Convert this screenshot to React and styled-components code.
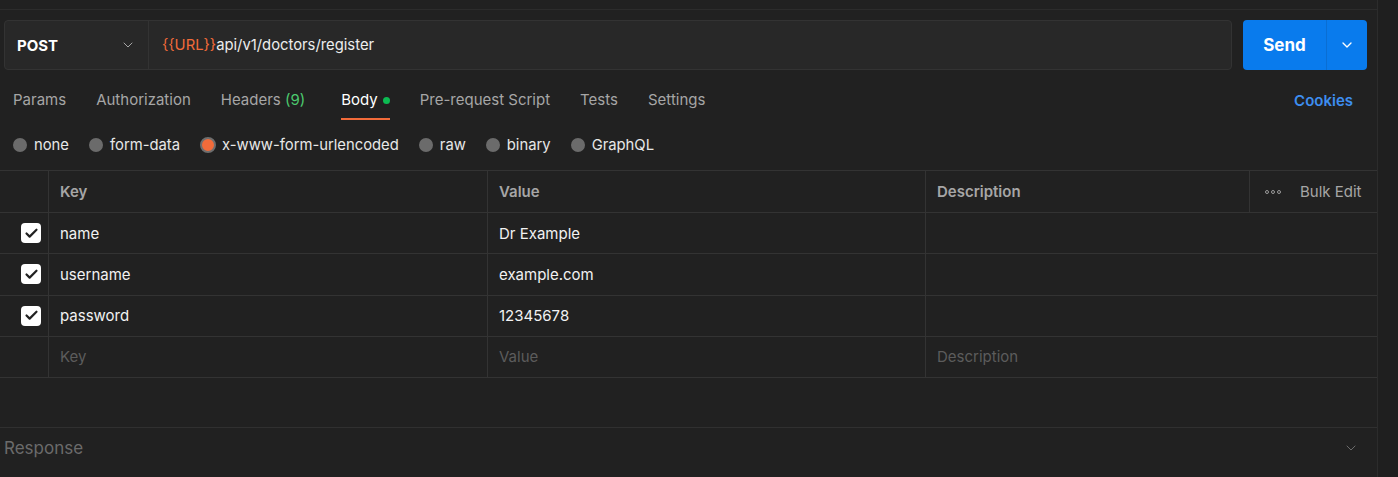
import React from "react";
import styled, { createGlobalStyle } from "styled-components";
import { ChevronDown, Check } from "lucide-react";

const Global = createGlobalStyle`
  html, body { margin: 0; padding: 0; background: #212121; }
  body { font-family: Inter, "Noto Sans", sans-serif; font-size: 15px; color: #e8e8e8; -webkit-font-smoothing: antialiased; }
  * { box-sizing: border-box; }
`;

const Shell = styled.div`
  display: flex;
  width: 1398px;
  height: 477px;
  overflow: hidden;
  background: #212121;
`;

const Main = styled.div`
  width: 1378px;
  border-right: 1px solid #2c2c2c;
  display: flex;
  flex-direction: column;
`;

const SideStrip = styled.div`
  flex: 1;
  background: #1f1f1f;
`;

const TopStrip = styled.div`
  height: 10px;
  flex-shrink: 0;
  border-bottom: 1px solid #2c2c2c;
`;

const RequestRow = styled.div`
  display: flex;
  gap: 11px;
  padding: 10px 10px 0 4px;
  height: 60px;
  flex-shrink: 0;
`;

const UrlGroup = styled.div`
  flex: 1;
  display: flex;
  background: #282828;
  border: 1px solid #333333;
  border-radius: 4px;
`;

const MethodSelect = styled.div`
  width: 144px;
  display: flex;
  align-items: center;
  justify-content: space-between;
  padding: 0 12px 0 12px;
  border-right: 1px solid #333333;
  font-weight: 700;
  color: #ffffff;
  font-size: 15px;
`;

const UrlText = styled.div`
  display: flex;
  align-items: center;
  padding-left: 13px;
  color: #ededed;
  font-size: 14.8px;
`;

const Variable = styled.span`
  color: #f26b3a;
`;

const SendButton = styled.div`
  width: 124px;
  display: flex;
  background: #097bed;
  border-radius: 4px;
  color: #ffffff;
`;

const SendLabel = styled.div`
  flex: 1;
  display: flex;
  align-items: center;
  justify-content: center;
  font-weight: 700;
  font-size: 17px;
  border-right: 1px solid #0a6ed3;
`;

const SendMenu = styled.div`
  width: 40px;
  display: flex;
  align-items: center;
  justify-content: center;
`;

const TabsRow = styled.div`
  display: flex;
  align-items: flex-end;
  padding: 0 24px 0 13px;
  height: 50px;
  flex-shrink: 0;
`;

const Tabs = styled.div`
  display: flex;
  gap: 30px;
  flex: 1;
`;

const Tab = styled.div`
  display: flex;
  align-items: center;
  gap: 5px;
  padding: 10px 0 8px;
  line-height: 20px;
  font-size: 15px;
  color: ${(p) => (p.$active ? "#ffffff" : "#a6a6a6")};
  border-bottom: 2px solid ${(p) => (p.$active ? "#f26b3a" : "transparent")};
`;

const Count = styled.span`
  color: #4cc96e;
  margin-right: 6px;
`;

const Dot = styled.span`
  width: 7px;
  height: 7px;
  border-radius: 50%;
  background: #0cbb52;
`;

const Cookies = styled.div`
  align-self: center;
  margin-top: 10px;
  color: #3d8ef0;
  font-weight: 600;
  font-size: 15px;
`;

const RadioRow = styled.div`
  display: flex;
  align-items: center;
  gap: 20px;
  height: 50px;
  flex-shrink: 0;
  padding-left: 13px;
`;

const RadioItem = styled.div`
  display: flex;
  align-items: center;
  gap: ${(p) => (p.$checked ? 6 : 7)}px;
  color: #e8e8e8;
  font-size: 14.8px;
`;

const RadioCircle = styled.span`
  width: ${(p) => (p.$checked ? 16 : 14)}px;
  height: ${(p) => (p.$checked ? 16 : 14)}px;
  border-radius: 50%;
  background: ${(p) => (p.$checked ? "#f26b3a" : "#6b6b6b")};
  border: ${(p) => (p.$checked ? "2.5px solid #6e6e6e" : "none")};
`;

const Table = styled.div`
  border-top: 1px solid #333333;
  display: flex;
  flex-direction: column;
  flex-shrink: 0;
`;

const Row = styled.div`
  display: grid;
  grid-template-columns: 49px 439px 438px 1fr;
  height: ${(p) => (p.$head ? "42px" : "41.25px")};
  border-bottom: 1px solid #333333;
`;

const Cell = styled.div`
  display: flex;
  align-items: center;
  padding-left: ${(p) => (p.$check ? 0 : 11)}px;
  justify-content: ${(p) => (p.$check ? "center" : "flex-start")};
  border-right: ${(p) => (p.$last ? "none" : "1px solid #333333")};
  font-size: 15px;
  font-weight: ${(p) => (p.$head ? 600 : 400)};
  color: ${(p) => (p.$head ? "#a6a6a6" : p.$placeholder ? "#5c5c5c" : "#f2f2f2")};
`;

const HeadLast = styled.div`
  display: flex;
  align-items: stretch;
`;

const DescHead = styled.div`
  flex: 1;
  display: flex;
  align-items: center;
  padding-left: 11px;
  font-weight: 600;
  color: #a6a6a6;
`;

const BulkArea = styled.div`
  width: 128px;
  display: flex;
  align-items: center;
  gap: 19px;
  padding-left: 15px;
  border-left: 1px solid #333333;
  color: #a6a6a6;
`;

const Dots = styled.span`
  display: flex;
  gap: 2px;
  span {
    width: 4px;
    height: 4px;
    border-radius: 50%;
    border: 1px solid #9a9a9a;
  }
`;

const CheckBox = styled.span`
  width: 20px;
  height: 20px;
  margin-left: 14px;
  border-radius: 4px;
  background: #ffffff;
  display: flex;
  align-items: center;
  justify-content: center;
  color: #212121;
`;

const Spacer = styled.div`
  height: 50px;
  flex-shrink: 0;
  border-bottom: 1px solid #303030;
`;

const Response = styled.div`
  display: flex;
  align-items: center;
  justify-content: space-between;
  height: 40px;
  padding: 0 18px 0 4px;
  color: #6b6b6b;
  font-size: 17px;
`;

const rows = [
  ["name", "Dr Example"],
  ["username", "example.com"],
  ["password", "12345678"],
];

const radios = ["none", "form-data", "x-www-form-urlencoded", "raw", "binary", "GraphQL"];

export default function App() {
  return (
    <Shell>
      <Global />
      <Main>
        <TopStrip />
        <RequestRow>
          <UrlGroup>
            <MethodSelect>
              POST
              <ChevronDown size={16} color="#a6a6a6" strokeWidth={1.5} />
            </MethodSelect>
            <UrlText>
              <Variable>{"{{URL}}"}</Variable>api/v1/doctors/register
            </UrlText>
          </UrlGroup>
          <SendButton>
            <SendLabel>Send</SendLabel>
            <SendMenu>
              <ChevronDown size={16} color="#ffffff" strokeWidth={2} />
            </SendMenu>
          </SendButton>
        </RequestRow>
        <TabsRow>
          <Tabs>
            <Tab>Params</Tab>
            <Tab>Authorization</Tab>
            <Tab>
              <span>
                Headers <Count>(9)</Count>
              </span>
            </Tab>
            <Tab $active>
              Body <Dot />
            </Tab>
            <Tab>Pre-request Script</Tab>
            <Tab>Tests</Tab>
            <Tab>Settings</Tab>
          </Tabs>
          <Cookies>Cookies</Cookies>
        </TabsRow>
        <RadioRow>
          {radios.map((r) => {
            const checked = r === "x-www-form-urlencoded";
            return (
              <RadioItem key={r} $checked={checked}>
                <RadioCircle $checked={checked} />
                {r}
              </RadioItem>
            );
          })}
        </RadioRow>
        <Table>
          <Row $head>
            <Cell $check />
            <Cell $head>Key</Cell>
            <Cell $head>Value</Cell>
            <HeadLast>
              <DescHead>Description</DescHead>
              <BulkArea>
                <Dots>
                  <span />
                  <span />
                  <span />
                </Dots>
                Bulk Edit
              </BulkArea>
            </HeadLast>
          </Row>
          {rows.map(([k, v]) => (
            <Row key={k}>
              <Cell $check>
                <CheckBox>
                  <Check size={15} strokeWidth={3.5} />
                </CheckBox>
              </Cell>
              <Cell>{k}</Cell>
              <Cell>{v}</Cell>
              <Cell $last />
            </Row>
          ))}
          <Row>
            <Cell $check />
            <Cell $placeholder>Key</Cell>
            <Cell $placeholder>Value</Cell>
            <Cell $placeholder $last>Description</Cell>
          </Row>
        </Table>
        <Spacer />
        <Response>
          Response
          <ChevronDown size={16} color="#6b6b6b" strokeWidth={1.5} />
        </Response>
      </Main>
      <SideStrip />
    </Shell>
  );
}
